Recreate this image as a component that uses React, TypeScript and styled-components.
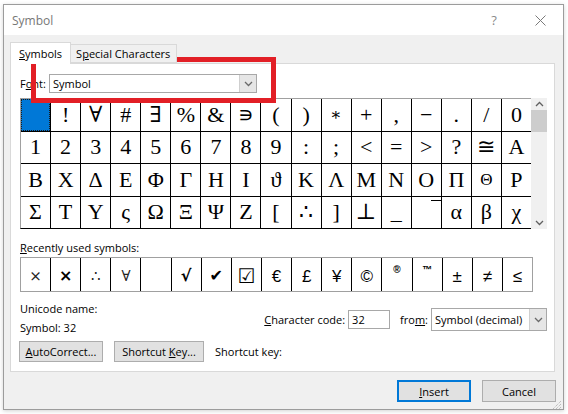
import React from "react";
import styled, { createGlobalStyle } from "styled-components";

const GlobalStyle = createGlobalStyle`
  html, body {
    margin: 0;
    padding: 0;
    background: #ffffff;
  }
  body {
    font-family: "Open Sans", "Noto Sans", sans-serif;
    font-size: 11px;
    color: #000;
  }
`;

const symbolRows: string[][] = [
  ["", "!", "∀", "#", "∃", "%", "&", "∍", "(", ")", "∗", "+", ",", "−", ".", "/", "0"],
  ["1", "2", "3", "4", "5", "6", "7", "8", "9", ":", ";", "<", "=", ">", "?", "≅", "Α"],
  ["Β", "Χ", "Δ", "Ε", "Φ", "Γ", "Η", "Ι", "ϑ", "Κ", "Λ", "Μ", "Ν", "Ο", "Π", "Θ", "Ρ"],
  ["Σ", "Τ", "Υ", "ς", "Ω", "Ξ", "Ψ", "Ζ", "[", "∴", "]", "⊥", "_", "‾", "α", "β", "χ"],
];

type Kind = "thin" | "small" | "mark" | "box" | "plain";
type Recent = { c: string; kind?: Kind };
const recent: Recent[] = [
  { c: "×", kind: "thin" },
  { c: "×", kind: "mark" },
  { c: "∴", kind: "thin" },
  { c: "∀", kind: "thin" },
  { c: "" },
  { c: "√", kind: "mark" },
  { c: "✔", kind: "mark" },
  { c: "☑", kind: "box" },
  { c: "€" },
  { c: "£" },
  { c: "¥" },
  { c: "©" },
  { c: "®", kind: "small" },
  { c: "™", kind: "small" },
  { c: "±" },
  { c: "≠" },
  { c: "≤" },
];

const Chevron: React.FC<{ up?: boolean; color?: string }> = ({ up, color = "#606060" }) => (
  <svg width="9" height="6" viewBox="0 0 9 6">
    <polyline
      points={up ? "1,5 4.5,1.5 8,5" : "1,1 4.5,4.5 8,1"}
      fill="none"
      stroke={color}
      strokeWidth="1.3"
    />
  </svg>
);

const App: React.FC = () => {
  return (
    <Page>
      <GlobalStyle />
      <Dialog>
        <TitleBar>
          <Title>Symbol</Title>
          <TitleButton>?</TitleButton>
          <TitleButton>
            <svg width="11" height="11" viewBox="0 0 11 11">
              <path d="M0.5 0.5 L10.5 10.5 M10.5 0.5 L0.5 10.5" stroke="#7a7a7a" strokeWidth="1" />
            </svg>
          </TitleButton>
        </TitleBar>
        <Body>
          <Tabs>
            <Tab active>
              <span>
                <u>S</u>ymbols
              </span>
            </Tab>
            <Tab>
              <span>
                S<u>p</u>ecial Characters
              </span>
            </Tab>
          </Tabs>
          <Panel>
            <FontRow>
              <FontLabel>
                F<u>o</u>nt:
              </FontLabel>
              <Combo width={208} height={19}>
                <ComboText>Symbol</ComboText>
                <ComboArrow>
                  <Chevron color="#6a6a6a" />
                </ComboArrow>
              </Combo>
            </FontRow>
            <GridWrap>
              <SymbolGrid>
                {symbolRows.flat().map((ch, i) => {
                  if (i === 0) return <Cell key={i} selected />;
                  if (ch === "‾")
                    return (
                      <Cell key={i} corner>
                        <Overbar />
                      </Cell>
                    );
                  return (
                    <Cell key={i} small={ch === "∗" || ch === "Θ"}>
                      {ch}
                    </Cell>
                  );
                })}
              </SymbolGrid>
              <ScrollBar>
                <ScrollButton>
                  <Chevron up />
                </ScrollButton>
                <Thumb />
                <ScrollSpace />
                <ScrollButton>
                  <Chevron />
                </ScrollButton>
              </ScrollBar>
            </GridWrap>
            <SectionLabel>
              <u>R</u>ecently used symbols:
            </SectionLabel>
            <RecentRow>
              {recent.map((r, i) => (
                <RecentCell key={i} kind={r.kind ?? "plain"}>
                  {r.c}
                </RecentCell>
              ))}
            </RecentRow>
            <InfoRow>
              <InfoText>
                <Line>Unicode name:</Line>
                <Line>Symbol: 32</Line>
              </InfoText>
              <CodeGroup>
                <span>
                  <u>C</u>haracter code:
                </span>
                <CodeInput>32</CodeInput>
                <FromLabel>
                  fro<u>m</u>:
                </FromLabel>
                <Combo width={116} height={23}>
                  <ComboText>Symbol (decimal)</ComboText>
                  <ComboArrow>
                    <Chevron color="#6a6a6a" />
                  </ComboArrow>
                </Combo>
              </CodeGroup>
            </InfoRow>
            <ButtonRow>
              <Button width={84}>
                <span>
                  <u>A</u>utoCorrect...
                </span>
              </Button>
              <Button width={90}>
                <span>
                  Shortcut <u>K</u>ey...
                </span>
              </Button>
              <span>Shortcut key:</span>
            </ButtonRow>
          </Panel>
          <Footer>
            <Button width={74} height={22} primary>
              <span>
                <u>I</u>nsert
              </span>
            </Button>
            <Button width={74} height={22}>
              <span>Cancel</span>
            </Button>
          </Footer>
        </Body>
        <Grip>
          <svg width="10" height="10" viewBox="0 0 10 10">
            <path d="M9 1 L1 9 M9 4 L4 9 M9 7 L7 9" stroke="#a8a8a8" strokeWidth="1" strokeDasharray="1 1" />
          </svg>
        </Grip>
      </Dialog>
      <Highlight />
    </Page>
  );
};

const Page = styled.div`
  position: relative;
  width: 568px;
  height: 414px;
  box-sizing: border-box;
  padding: 4px 0 0 3px;
`;

const Dialog = styled.div`
  position: relative;
  width: 561px;
  height: 406px;
  box-sizing: border-box;
  border: 1px solid #9c9c9c;
  background: #f0f0f0;
  display: flex;
  flex-direction: column;
  box-shadow: 0 1px 4px rgba(0, 0, 0, 0.18);
`;

const TitleBar = styled.div`
  height: 30px;
  flex: none;
  background: #ffffff;
  display: flex;
  align-items: center;
  padding-left: 8px;
`;

const Title = styled.div`
  font-size: 12px;
  color: #777777;
  flex: 1;
`;

const TitleButton = styled.div`
  width: 46px;
  height: 30px;
  display: flex;
  align-items: center;
  justify-content: center;
  color: #8a8a8a;
  font-size: 13px;
`;

const Body = styled.div`
  flex: 1;
  display: flex;
  flex-direction: column;
  padding: 7px 8px 0 6px;
`;

const Tabs = styled.div`
  display: flex;
  align-items: flex-end;
  height: 22px;
  margin-bottom: -1px;
  position: relative;
  z-index: 1;
`;

const Tab = styled.div<{ active?: boolean }>`
  box-sizing: border-box;
  height: ${(p) => (p.active ? "22px" : "19px")};
  padding: ${(p) => (p.active ? "0 8px 0 8px" : "0 6px 0 5px")};
  margin-left: ${(p) => (p.active ? "0" : "-1px")};
  margin-bottom: ${(p) => (p.active ? "0" : "1px")};
  border: 1px solid #d9d9d9;
  border-bottom: ${(p) => (p.active ? "none" : "1px solid #d9d9d9")};
  background: ${(p) => (p.active ? "#ffffff" : "#f0f0f0")};
  display: flex;
  align-items: center;
  white-space: nowrap;
`;

const Panel = styled.div`
  height: 309px;
  box-sizing: border-box;
  border: 1px solid #d9d9d9;
  background: #ffffff;
  padding: 10px 7px 0 9px;
  display: flex;
  flex-direction: column;
`;

const FontRow = styled.div`
  display: flex;
  align-items: center;
  height: 19px;
`;

const FontLabel = styled.span`
  width: 29px;
`;

const Combo = styled.div<{ width: number; height: number }>`
  box-sizing: border-box;
  width: ${(p) => p.width}px;
  height: ${(p) => p.height}px;
  border: 1px solid #a8a8a8;
  background: #ffffff;
  display: flex;
  align-items: stretch;
`;

const ComboText = styled.div`
  flex: 1;
  display: flex;
  align-items: center;
  padding-left: 3px;
  white-space: nowrap;
`;

const ComboArrow = styled.div`
  width: 16px;
  background: #e6e6e6;
  border-left: 1px solid #cfcfcf;
  display: flex;
  align-items: center;
  justify-content: center;
`;

const GridWrap = styled.div`
  display: flex;
  margin-top: 5px;
  height: 131px;
`;

const SymbolGrid = styled.div`
  flex: 1;
  box-sizing: border-box;
  display: grid;
  grid-template-columns: repeat(17, 1fr);
  grid-template-rows: repeat(4, 1fr);
  gap: 1px;
  background: #000000;
  border-top: 1px solid #a0a0a0;
  border-left: 1px solid #a0a0a0;
  border-bottom: 1px solid #000000;
`;

const Cell = styled.div<{ selected?: boolean; small?: boolean; corner?: boolean }>`
  position: relative;
  background: ${(p) => (p.selected ? "#0078d7" : "#ffffff")};
  outline: ${(p) => (p.selected ? "1px dotted #1a1a1a" : "none")};
  outline-offset: -1px;
  display: flex;
  align-items: ${(p) => (p.corner ? "flex-start" : "center")};
  justify-content: ${(p) => (p.corner ? "flex-end" : "center")};
  font-family: "Liberation Serif", "DejaVu Serif", serif;
  font-size: ${(p) => (p.small ? "17px" : "22px")};
  line-height: 1;
`;

const Overbar = styled.span`
  width: 10px;
  height: 1px;
  margin-top: 3px;
  background: #000000;
`;

const ScrollBar = styled.div`
  width: 16px;
  background: #f0f0f0;
  display: flex;
  flex-direction: column;
`;

const ScrollButton = styled.div`
  height: 12px;
  display: flex;
  align-items: center;
  justify-content: center;
`;

const Thumb = styled.div`
  height: 22px;
  background: #cdcdcd;
`;

const ScrollSpace = styled.div`
  flex: 1;
`;

const SectionLabel = styled.div`
  margin-top: 11px;
  line-height: 16px;
`;

const RecentRow = styled.div`
  margin-top: 1px;
  width: 513px;
  height: 35px;
  box-sizing: border-box;
  border: 1px solid #a0a0a0;
  display: grid;
  grid-template-columns: repeat(17, 1fr);
  gap: 1px;
  background: #000000;
`;

const recentFont: Record<Kind, string> = {
  thin: '"DejaVu Serif", "Liberation Serif", serif',
  small: '"Liberation Sans", sans-serif',
  mark: '"DejaVu Sans", sans-serif',
  box: '"DejaVu Sans", sans-serif',
  plain: '"Liberation Sans", "DejaVu Sans", sans-serif',
};

const recentSize: Record<Kind, string> = {
  thin: "15px",
  small: "10px",
  mark: "16px",
  box: "20px",
  plain: "17px",
};

const RecentCell = styled.div<{ kind: Kind }>`
  background: #ffffff;
  display: flex;
  align-items: ${(p) => (p.kind === "small" ? "flex-start" : "center")};
  justify-content: center;
  padding-top: ${(p) => (p.kind === "small" ? "7px" : "3px")};
  box-sizing: border-box;
  font-family: ${(p) => recentFont[p.kind]};
  font-weight: ${(p) => (p.kind === "thin" ? 300 : p.kind === "small" || p.kind === "mark" ? 700 : 400)};
  font-size: ${(p) => recentSize[p.kind]};
  color: ${(p) => (p.kind === "thin" ? "#222" : "#000")};
  line-height: 1;
`;

const InfoRow = styled.div`
  display: flex;
  margin-top: 9px;
`;

const InfoText = styled.div`
  display: flex;
  flex-direction: column;
  gap: 3px;
`;

const Line = styled.div`
  line-height: 16px;
`;

const CodeGroup = styled.div`
  margin-left: auto;
  padding-top: 7px;
  display: flex;
  align-items: center;
  align-self: flex-start;
`;

const CodeInput = styled.div`
  box-sizing: border-box;
  width: 42px;
  height: 19px;
  margin-left: 3px;
  border: 1px solid #a8a8a8;
  padding-left: 3px;
  display: flex;
  align-items: center;
`;

const FromLabel = styled.span`
  margin: 0 3px 0 10px;
`;

const ButtonRow = styled.div`
  display: flex;
  align-items: center;
  gap: 11px;
  margin-top: 5px;
  margin-left: -1px;
`;

const Button = styled.div<{ width: number; height?: number; primary?: boolean }>`
  box-sizing: border-box;
  width: ${(p) => p.width}px;
  height: ${(p) => p.height ?? 21}px;
  background: #e1e1e1;
  border: ${(p) => (p.primary ? "2px solid #0078d7" : "1px solid #adadad")};
  display: flex;
  align-items: center;
  justify-content: center;
  white-space: nowrap;
`;

const Footer = styled.div`
  display: flex;
  justify-content: flex-end;
  gap: 11px;
  margin-top: 8px;
  margin-right: -1px;
`;

const Grip = styled.div`
  position: absolute;
  right: 1px;
  bottom: 1px;
  width: 10px;
  height: 10px;
`;

const Highlight = styled.div`
  position: absolute;
  left: 31px;
  top: 57px;
  width: 245px;
  height: 46px;
  box-sizing: border-box;
  border: 5px solid #e21f26;
  pointer-events: none;
`;

export default App;
